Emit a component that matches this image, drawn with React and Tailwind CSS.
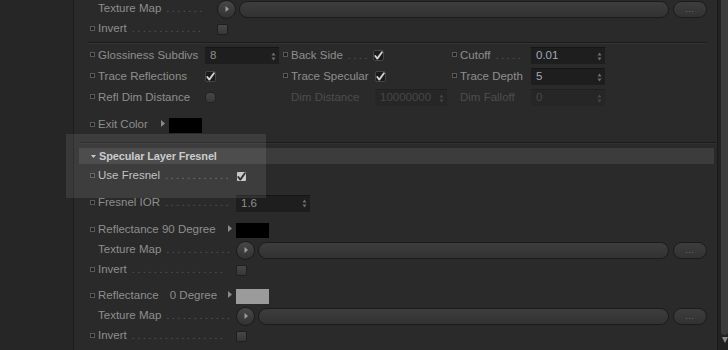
import React from 'react'

function Marker({ show = true }) {
    if (!show) return <span className="w-[5px] mr-[3px] shrink-0" />
    return <span className="w-[5px] h-[5px] mr-[3px] -mt-[2px] shrink-0 border border-[#595959] bg-[#1d1d1d]" />
}

function Label({ w, text, marker = true, dots = 0, tone = 'normal', children }) {
    const color = tone === 'dim' ? 'text-[#4d4d4d]' : tone === 'bright' ? 'text-[#bdbdbd]' : 'text-[#8e8e8e]'
    const dotColor = tone === 'bright' ? 'text-[#6a6a6a]' : 'text-[#585858]'
    return (
        <div className={`flex items-center shrink-0 h-full ${w}`}>
            <Marker show={marker} />
            <span className={`whitespace-nowrap ${color}`}>{children ?? text}</span>
            {dots > 0 && (
                <span className={`ml-[5px] whitespace-nowrap tracking-[2.3px] ${dotColor}`}>
                    {'.'.repeat(dots)}
                </span>
            )}
        </div>
    )
}

function Spinner({ color }) {
    return (
        <svg width="5" height="9" viewBox="0 0 5 9" className="shrink-0">
            <path d="M2.5 0.5 L4.5 3.5 L0.5 3.5 Z" fill={color} />
            <path d="M2.5 8.5 L4.5 5.5 L0.5 5.5 Z" fill={color} />
        </svg>
    )
}

function NumInput({ value, blue = false }) {
    return (
        <div className="w-[74px] h-[17px] shrink-0 flex items-center bg-[#1e1e1e] border-t border-[#151515] pl-[5px] pr-[3px]">
            <span className={`flex-1 ${blue ? 'text-[#a3aabb]' : 'text-[#8e8e8e]'}`}>{value}</span>
            <Spinner color="#6f6f6f" />
        </div>
    )
}

function DimInput({ value, narrow = false }) {
    return (
        <div className={`h-[17px] shrink-0 flex items-center bg-[#262626] border-t border-[#202020] pl-[5px] pr-[3px] ${narrow ? 'w-[72px] ml-[2px]' : 'w-[74px]'}`}>
            <span className="flex-1 min-w-0 overflow-hidden whitespace-nowrap text-[#474747] mr-[2px]">{value}</span>
            <Spinner color="#474747" />
        </div>
    )
}

function CheckMark({ color }) {
    return (
        <svg width="9" height="9" viewBox="0 0 9 9">
            <path d="M1.3 5 L3.3 7.6 L7.9 1.2" stroke={color} strokeWidth="1.8" fill="none" strokeLinecap="round" strokeLinejoin="round" />
        </svg>
    )
}

function Check({ on = false, light = false, round = false }) {
    if (light) {
        return (
            <span className="w-[11px] h-[11px] shrink-0 rounded-[2px] bg-[#c4c4c4] border border-[#2a2a2a] flex items-center justify-center">
                <CheckMark color="#1a1a1a" />
            </span>
        )
    }
    if (on) {
        return (
            <span className="w-[11px] h-[11px] shrink-0 rounded-[2px] bg-[#1b1b1b] border border-[#454545] flex items-center justify-center">
                <CheckMark color="#d4d4d4" />
            </span>
        )
    }
    if (round) {
        return <span className="w-[11px] h-[11px] shrink-0 rounded-[4px] bg-linear-to-b from-[#464646] to-[#383838] border border-[#222222]" />
    }
    return <span className="w-[11px] h-[11px] shrink-0 rounded-[2px] bg-linear-to-b from-[#474747] to-[#373737] border border-[#1f1f1f]" />
}

function TexField() {
    return (
        <div className="flex-1 min-w-0 flex items-center">
            <div className="w-[19px] h-[19px] shrink-0 rounded-full border border-[#1b1b1b] bg-linear-to-b from-[#474747] to-[#323232] flex items-center justify-center">
                <svg width="4" height="6" viewBox="0 0 4 6"><path d="M0.5 0 L4 3 L0.5 6 Z" fill="#9c9c9c" /></svg>
            </div>
            <div className="flex-1 h-[17px] ml-[3px] rounded-full border border-[#1b1b1b] bg-linear-to-b from-[#3d3d3d] to-[#323232]" />
            <div className="w-[34px] h-[17px] ml-[4px] shrink-0 rounded-full border border-[#1b1b1b] bg-linear-to-b from-[#3d3d3d] to-[#323232] flex items-end justify-center pb-[3px] text-[8px] text-[#858585] tracking-[1px]">
                ...
            </div>
        </div>
    )
}

function Swatch({ color }) {
    return (
        <div className="flex items-center">
            <svg width="4" height="7" viewBox="0 0 4 7" className="mr-[4px] -mt-[4px] shrink-0">
                <path d="M0 0 L4 3.5 L0 7 Z" fill="#8a8a8a" />
            </svg>
            <div className={`w-[33px] h-[15px] ${color}`} />
        </div>
    )
}

export default function App() {
    return (
        <div className="relative w-[728px] h-[350px] overflow-hidden flex bg-[#2a2a2a] font-['Liberation_Sans',Arial,sans-serif] text-[11.5px] leading-none text-[#8e8e8e]">
            <div className="w-[74px] shrink-0 bg-[#262626] border-r border-[#1c1c1c]" />

            <div className="flex-1 min-w-0 flex flex-col pl-[16px]">
                {/* texture group */}
                <div className="flex items-center h-[20px] -mt-[1px] pr-[10px]">
                    <Label w="w-[127px]" text="Texture Map" marker={false} dots={7} />
                    <TexField />
                </div>
                <div className="flex items-center h-[20px]">
                    <Label w="w-[127px]" text="Invert" dots={13} />
                    <Check />
                </div>

                <div className="mt-[3px] -ml-[2px] mr-[10px] h-[2px] border-t border-t-[#1b1b1b] border-b border-b-[#343434]" />

                {/* trace settings */}
                <div className="mt-[1px] flex items-center h-[21px]">
                    <Label w="w-[115px]" text="Glossiness Subdivs" />
                    <NumInput value="8" />
                    <div className="w-[4px] shrink-0" />
                    <Label w="w-[90px]" text="Back Side" dots={4} />
                    <div className="w-[79px] shrink-0 flex items-center"><Check on /></div>
                    <Label w="w-[79px]" text="Cutoff" dots={5} />
                    <NumInput value="0.01" blue />
                </div>
                <div className="flex items-center h-[21px]">
                    <Label w="w-[115px]" text="Trace Reflections" />
                    <div className="w-[74px] shrink-0 flex items-center"><Check on /></div>
                    <div className="w-[4px] shrink-0" />
                    <Label w="w-[90px]" text="Trace Specular" />
                    <div className="w-[79px] shrink-0 flex items-center pl-[2px]"><Check on /></div>
                    <Label w="w-[79px]" text="Trace Depth" />
                    <NumInput value="5" blue />
                </div>
                <div className="flex items-center h-[21px]">
                    <Label w="w-[115px]" text="Refl Dim Distance" />
                    <div className="w-[74px] shrink-0 flex items-center"><Check round /></div>
                    <div className="w-[4px] shrink-0" />
                    <Label w="w-[90px]" text="Dim Distance" marker={false} tone="dim" />
                    <div className="w-[79px] shrink-0 flex items-center"><DimInput value="10000000" narrow /></div>
                    <Label w="w-[79px]" text="Dim Falloff" marker={false} tone="dim" />
                    <DimInput value="0" />
                </div>

                <div className="mt-[8px] flex items-center h-[18px]">
                    <Label w="w-[71px]" text="Exit Color" />
                    <Swatch color="bg-black" />
                </div>

                <div className="mt-[8px] -ml-[11px] mr-[1px] h-[2px] border-t border-t-[#1b1b1b] border-b border-b-[#323232]" />

                {/* fresnel section */}
                <div className="mt-[4px] -ml-[11px] mr-[2px] h-[16px] bg-[#3c3c3c] border-r border-[#2a2a2a] flex items-center pl-[12px]">
                    <svg width="5" height="3" viewBox="0 0 5 3" className="shrink-0"><path d="M0 0 L5 0 L2.5 3 Z" fill="#c4c4c4" /></svg>
                    <span className="ml-[3px] font-bold text-[11px] tracking-[-0.15px] text-[#c6c6c6] whitespace-nowrap">Specular Layer Fresnel</span>
                </div>

                <div className="mt-[2px] flex items-center h-[20px]">
                    <Label w="w-[146px]" text="Use Fresnel" tone="bright" dots={12} />
                    <Check light />
                </div>
                <div className="mt-[7px] flex items-center h-[20px]">
                    <Label w="w-[146px]" text="Fresnel IOR" dots={12} />
                    <NumInput value="1.6" />
                </div>
                <div className="mt-[7px] flex items-center h-[20px]">
                    <Label w="w-[138px]" text="Reflectance 90 Degree" />
                    <Swatch color="bg-black" />
                </div>
                <div className="flex items-center h-[20px] pr-[10px]">
                    <Label w="w-[146px]" text="Texture Map" marker={false} dots={12} />
                    <TexField />
                </div>
                <div className="flex items-center h-[20px]">
                    <Label w="w-[146px]" text="Invert" dots={17} />
                    <Check />
                </div>
                <div className="mt-[6px] flex items-center h-[20px]">
                    <Label w="w-[138px]">
                        Reflectance<span className="ml-[11px]">0 Degree</span>
                    </Label>
                    <Swatch color="bg-[#9b9b9b]" />
                </div>
                <div className="flex items-center h-[20px] pr-[10px]">
                    <Label w="w-[146px]" text="Texture Map" marker={false} dots={12} />
                    <TexField />
                </div>
                <div className="flex items-center h-[20px]">
                    <Label w="w-[146px]" text="Invert" dots={17} />
                    <Check />
                </div>
            </div>

            {/* scrollbar */}
            <div className="w-[11px] shrink-0 flex flex-col border-l border-[#1a1a1a] bg-[#222222] pl-[3px]">
                <div className="flex-1 bg-[#3b3b3b] rounded-b-[4px]" />
                <div className="h-[15px] flex items-start justify-center pt-[2px] pb-[2px]">
                    <svg width="6" height="6" viewBox="0 0 6 6"><path d="M0 0 L6 0 L3 6 Z" fill="#8e8e8e" /></svg>
                </div>
            </div>

            {/* tutorial highlight */}
            <div className="absolute left-[66px] top-[134px] w-[200px] h-[64px] bg-white/[0.09] pointer-events-none" />
        </div>
    )
}
